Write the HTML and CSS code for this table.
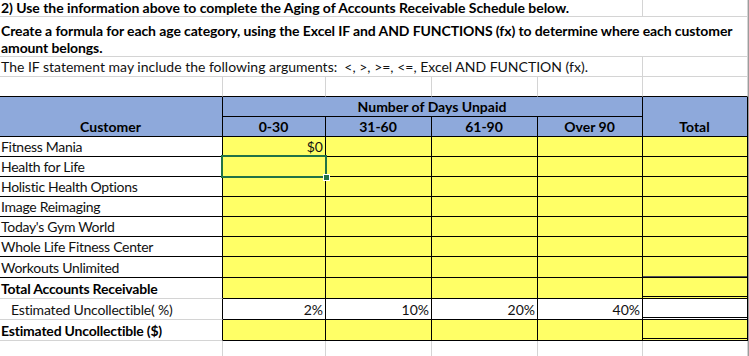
FILE: index.html
```html
<!DOCTYPE html>
<html>
<head>
<meta charset="utf-8">
<link rel="stylesheet" href="styles.css">
</head>
<body>
<div class="sheet">
  <div class="grid">
    <div class="c span5 b t1">2) Use the information above to complete the Aging of Accounts Receivable Schedule below.</div>
    <div class="c"></div>

    <div class="c span6 b wrap">Create a formula for each age category, using the Excel IF and AND FUNCTIONS (fx) to determine where each customer<br>amount belongs.</div>

    <div class="c span5">The IF statement may include the following arguments:&nbsp; &lt;, &gt;, &gt;=, &lt;=, Excel AND FUNCTION (fx).</div>
    <div class="c"></div>

    <div class="c kb"></div><div class="c kb"></div><div class="c kb"></div><div class="c kb"></div><div class="c kb"></div><div class="c kb"></div>

    <div class="h hcust b center">Customer</div>
    <div class="h hdays b center">Number of Days Unpaid</div>
    <div class="h htotal b center">Total</div>
    <div class="h hsub b center">0-30</div>
    <div class="h hsub b center">31-60</div>
    <div class="h hsub b center">61-90</div>
    <div class="h hsub b center">Over 90</div>

    <div class="c name">Fitness Mania</div>
    <div class="y right">$0</div><div class="y"></div><div class="y"></div><div class="y"></div><div class="y"></div>

    <div class="c name">Health for Life</div>
    <div class="y sel"><span class="selbox"><span class="handle"></span></span></div><div class="y"></div><div class="y"></div><div class="y"></div><div class="y"></div>

    <div class="c name">Holistic Health Options</div>
    <div class="y"></div><div class="y"></div><div class="y"></div><div class="y"></div><div class="y"></div>

    <div class="c name">Image Reimaging</div>
    <div class="y"></div><div class="y"></div><div class="y"></div><div class="y"></div><div class="y"></div>

    <div class="c name">Today's Gym World</div>
    <div class="y"></div><div class="y"></div><div class="y"></div><div class="y"></div><div class="y"></div>

    <div class="c name">Whole Life Fitness Center</div>
    <div class="y"></div><div class="y"></div><div class="y"></div><div class="y"></div><div class="y"></div>

    <div class="c name">Workouts Unlimited</div>
    <div class="y"></div><div class="y"></div><div class="y"></div><div class="y"></div><div class="y ft2"></div>

    <div class="c name2 b tight">Total Accounts Receivable</div>
    <div class="y"></div><div class="y"></div><div class="y"></div><div class="y"></div><div class="y fdbl"></div>

    <div class="c name2 indent">Estimated Uncollectible( %)</div>
    <div class="w right">2%</div><div class="w right">10%</div><div class="w right">20%</div><div class="w right">40%</div><div class="w fdbl"></div>

    <div class="c name2 b tight">Estimated Uncollectible ($)</div>
    <div class="y"></div><div class="y"></div><div class="y"></div><div class="y"></div><div class="y fdbl"></div>

    <div class="c"></div><div class="c"></div><div class="c"></div><div class="c"></div><div class="c"></div><div class="c"></div>
  </div>
  <div class="strip"></div>
</div>
</body>
</html>
```
FILE: styles.css
```css
html, body {
  margin: 0;
  padding: 0;
  background: #fff;
}
body {
  font-family: Lato, "Open Sans", sans-serif;
  font-size: 14px;
  color: #111;
  overflow: hidden;
}
.sheet {
  display: flex;
  width: 749px;
  height: 356px;
  overflow: hidden;
}
.grid {
  display: grid;
  grid-template-columns: 223px 103px 106px 106px 105px 105px;
  grid-template-rows: 17px 40px 20px 20px 20px 20px 20px 20px 20px 20px 20px 20px 21px 21px 21px 21px 16px;
  width: 748px;
}
.strip {
  width: 1px;
  background: #9c9c9c;
}
.grid > div {
  box-sizing: border-box;
  display: flex;
  align-items: flex-end;
  line-height: 16px;
  padding: 0 2px 1px 1px;
  white-space: nowrap;
}
.c {
  border-right: 1px solid #d4d4d4;
  border-bottom: 1px solid #d4d4d4;
}
.span5 { grid-column: span 5; }
.span6 { grid-column: span 6; }
.b { font-weight: 700; color: #000; }
.grid > .t1 {
  letter-spacing: -0.05px;
  padding-bottom: 0;
}
.wrap {
  line-height: 17px !important;
  padding-bottom: 0 !important;
  letter-spacing: -0.1px;
}
.kb { border-bottom-color: #000; }
.h {
  background: #8ea9db;
  border-right: 1px solid #000;
  border-bottom: 1px solid #000;
}
.center { justify-content: center; }
.right { justify-content: flex-end; }
.hcust { grid-row: span 2; }
.htotal { grid-row: span 2; }
.hdays { grid-column: span 4; }
.name {
  border-right-color: #000;
  border-bottom-color: #000;
  letter-spacing: -0.3px;
}
.name2 {
  border-right-color: #000;
}
.tight { letter-spacing: -0.2px; }
.indent {
  padding-left: 11px !important;
  letter-spacing: -0.2px;
}
.y, .w {
  border-right: 1px solid #000;
  border-bottom: 1px solid #000;
}
.y { background: #ffff66; }
.w { background: #fff; }
.ft2 { box-shadow: inset 0 -1px 0 #555; }
.fdbl { border-bottom: 3px double #000; }
.sel { position: relative; }
.selbox {
  position: absolute;
  left: -2px;
  top: -2px;
  width: 106px;
  height: 23px;
  box-sizing: border-box;
  border: 2px solid #217346;
  z-index: 2;
}
.handle {
  position: absolute;
  left: 100px;
  top: 17px;
  width: 5px;
  height: 5px;
  background: #217346;
  border: 1px solid #fff;
}
```
